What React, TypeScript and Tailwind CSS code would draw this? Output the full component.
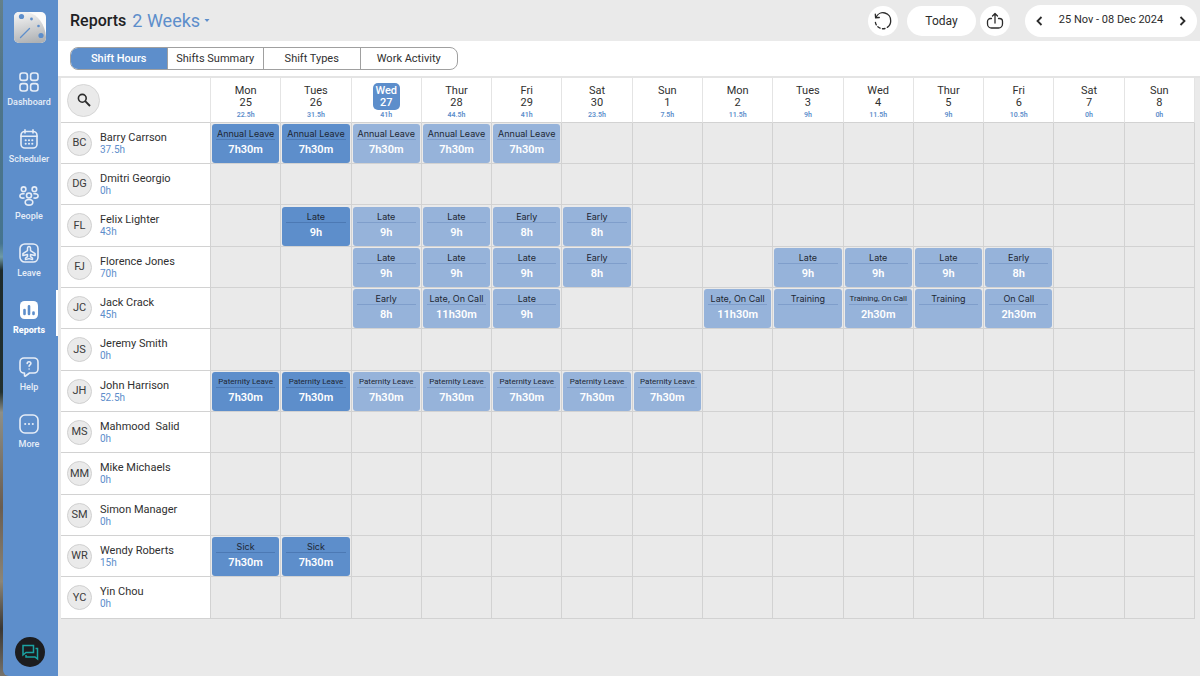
import React from "react";

const BRAND = "#5d8ecb";

type NavItem = { label: string; icon: React.ReactNode; active?: boolean };

function Icon({ children }: { children: React.ReactNode }) {
  return (
    <svg
      viewBox="0 0 20 20"
      className="size-5 shrink-0"
      fill="none"
      stroke="currentColor"
      strokeWidth="1.6"
      strokeLinecap="round"
      strokeLinejoin="round"
      aria-hidden="true"
    >
      {children}
    </svg>
  );
}

const navItems: NavItem[] = [
  {
    label: "Dashboard",
    icon: (
      <Icon>
        <rect x="1" y="1" width="7.4" height="7.4" rx="2.4" />
        <rect x="11.6" y="1" width="7.4" height="7.4" rx="2.4" />
        <rect x="1" y="11.6" width="7.4" height="7.4" rx="2.4" />
        <rect x="11.6" y="11.6" width="7.4" height="7.4" rx="2.4" />
      </Icon>
    ),
  },
  {
    label: "Scheduler",
    icon: (
      <Icon>
        <rect x="2" y="2.5" width="16" height="16.5" rx="3.8" />
        <path d="M2 7.2h16M6 .9v3M14 .9v3" />
        <path d="M6.7 11.2h.01M10 11.2h.01M13.3 11.2h.01M6.7 14.7h.01M10 14.7h.01M13.3 14.7h.01" strokeWidth="2.1" />
      </Icon>
    ),
  },
  {
    label: "People",
    icon: (
      <Icon>
        <circle cx="4.6" cy="3.2" r="2.3" />
        <circle cx="15.4" cy="3.2" r="2.3" />
        <circle cx="10" cy="9.5" r="2.5" />
        <ellipse cx="10" cy="16.3" rx="3.8" ry="2.8" />
        <path d="M5 12C2.500 12.500.9 11.500.9 10c0-1.600 1.600-2.500 4.100-2.300M15 12c2.500.5 4.100-.5 4.100-2 0-1.600-1.600-2.500-4.100-2.300" />
      </Icon>
    ),
  },
  {
    label: "Leave",
    icon: (
      <Icon>
        <rect x="1" y="1" width="18" height="18" rx="4.8" />
        <path
          d="M10 3.4c1 0 1.500 1 1.500 2.200v2l4.600 3.100v1.900l-4.600-1v2.100l2 1.400v1.500L10 15.600l-3.500 1v-1.500l2-1.400v-2.100l-4.600 1v-1.900l4.600-3.100v-2c0-1.200.5-2.200 1.500-2.200z"
          strokeWidth="1.5"
        />
      </Icon>
    ),
  },
  {
    label: "Reports",
    active: true,
    icon: (
      <svg viewBox="0 0 20 20" className="size-5 shrink-0" aria-hidden="true">
        <rect x="1" y="1" width="18" height="18" rx="4.5" fill="#fff" />
        <path d="M5.500 10v4M10 6.300v7.700M14.500 12.500v1.500" stroke={BRAND} strokeWidth="2.6" strokeLinecap="round" />
      </svg>
    ),
  },
  {
    label: "Help",
    icon: (
      <Icon>
        <path d="M5 1h10a4 4 0 0 1 4 4v7a4 4 0 0 1-4 4h-4.500L6.500 19c-.5.300-1 0-1-.5V16H5a4 4 0 0 1-4-4V5a4 4 0 0 1 4-4z" />
        <path d="M8.200 6.400c0-1.100.8-1.700 1.800-1.700s1.900.7 1.900 1.700c0 1.400-1.800 1.500-1.800 2.800M10.100 12h.01" />
      </Icon>
    ),
  },
  {
    label: "More",
    icon: (
      <Icon>
        <rect x="1" y="1" width="18" height="18" rx="5" />
        <path d="M6.200 10h.01M10 10h.01M13.800 10h.01" strokeWidth="2.1" />
      </Icon>
    ),
  },
];

type Day = { name: string; date: number; total: string; today?: boolean };

const days: Day[] = [
  { name: "Mon", date: 25, total: "22.5h" },
  { name: "Tues", date: 26, total: "31.5h" },
  { name: "Wed", date: 27, total: "41h", today: true },
  { name: "Thur", date: 28, total: "44.5h" },
  { name: "Fri", date: 29, total: "41h" },
  { name: "Sat", date: 30, total: "23.5h" },
  { name: "Sun", date: 1, total: "7.5h" },
  { name: "Mon", date: 2, total: "11.5h" },
  { name: "Tues", date: 3, total: "9h" },
  { name: "Wed", date: 4, total: "11.5h" },
  { name: "Thur", date: 5, total: "9h" },
  { name: "Fri", date: 6, total: "10.5h" },
  { name: "Sat", date: 7, total: "0h" },
  { name: "Sun", date: 8, total: "0h" },
];

type Shift = [label: string, hours: string];
type Person = { initials: string; name: string; total: string; shifts: Record<number, Shift> };

const annual: Shift = ["Annual Leave", "7h30m"];
const paternity: Shift = ["Paternity Leave", "7h30m"];
const sick: Shift = ["Sick", "7h30m"];
const late: Shift = ["Late", "9h"];
const early: Shift = ["Early", "8h"];
const training: Shift = ["Training", ""];

const people: Person[] = [
  { initials: "BC", name: "Barry Carrson", total: "37.5h", shifts: { 0: annual, 1: annual, 2: annual, 3: annual, 4: annual } },
  { initials: "DG", name: "Dmitri Georgio", total: "0h", shifts: {} },
  { initials: "FL", name: "Felix Lighter", total: "43h", shifts: { 1: late, 2: late, 3: late, 4: early, 5: early } },
  {
    initials: "FJ",
    name: "Florence Jones",
    total: "70h",
    shifts: { 2: late, 3: late, 4: late, 5: early, 8: late, 9: late, 10: late, 11: early },
  },
  {
    initials: "JC",
    name: "Jack Crack",
    total: "45h",
    shifts: {
      2: early,
      3: ["Late, On Call", "11h30m"],
      4: late,
      7: ["Late, On Call", "11h30m"],
      8: training,
      9: ["Training, On Call", "2h30m"],
      10: training,
      11: ["On Call", "2h30m"],
    },
  },
  { initials: "JS", name: "Jeremy Smith", total: "0h", shifts: {} },
  {
    initials: "JH",
    name: "John Harrison",
    total: "52.5h",
    shifts: { 0: paternity, 1: paternity, 2: paternity, 3: paternity, 4: paternity, 5: paternity, 6: paternity },
  },
  { initials: "MS", name: "Mahmood  Salid", total: "0h", shifts: {} },
  { initials: "MM", name: "Mike Michaels", total: "0h", shifts: {} },
  { initials: "SM", name: "Simon Manager", total: "0h", shifts: {} },
  { initials: "WR", name: "Wendy Roberts", total: "15h", shifts: { 0: sick, 1: sick } },
  { initials: "YC", name: "Yin Chou", total: "0h", shifts: {} },
];

const tabs = ["Shift Hours", "Shifts Summary", "Shift Types", "Work Activity"];

function Sidebar() {
  return (
    <aside className="flex shrink-0 bg-[linear-gradient(180deg,#64808a_0%,#4f7488_12%,#45748f_36%,#6f9aa6_38%,#1d2a2c_40%,#22302f_58%,#8d8f88_61%,#6a5d50_75%,#8b8577_86%,#3a3733_93%,#77736b_100%)] pl-[3px]">
      <div className="flex w-[55px] flex-col rounded-bl-md bg-[#5d8ecb] pt-3 pb-[9px] text-[#e6edf7]">
        <svg viewBox="0 0 32 32" className="ml-[11px] size-8" role="img" aria-label="Logo">
          <defs>
            <linearGradient id="logo" x1="0.4" y1="0" x2="0.6" y2="1">
              <stop offset="0" stopColor="#f2f2f2" />
              <stop offset="1" stopColor="#aeb1b4" />
            </linearGradient>
          </defs>
          <rect width="32" height="31" rx="5" fill="#fbfbfb" />
          <path d="M0 5a5 5 0 0 1 5-5h9C24 3 31 12 32 25v1a5 5 0 0 1-5 5H5a5 5 0 0 1-5-5z" fill="url(#logo)" />
          <g fill={BRAND}>
            <circle cx="7.5" cy="4.5" r="2.6" />
            <circle cx="17.5" cy="7" r="1.4" />
            <circle cx="24.5" cy="14" r="1.3" />
            <circle cx="27" cy="23.5" r="2.6" />
          </g>
          <path d="M6.500 25.500l9-9" stroke={BRAND} strokeWidth="1.3" strokeLinecap="round" />
        </svg>
        <nav className="mt-[18px] w-full">
          <ul>
            {navItems.map((item) => (
              <li key={item.label} className="h-[57px]">
                <a
                  href="#"
                  aria-current={item.active ? "page" : undefined}
                  className={`flex h-[46px] w-full flex-col items-center gap-1 border-r-2 pt-[10px] pr-px text-[9px] leading-3 ${
                    item.active ? "border-white font-extrabold text-white" : "border-transparent font-medium"
                  }`}
                >
                  {item.icon}
                  {item.label}
                </a>
              </li>
            ))}
          </ul>
        </nav>
        <button aria-label="Chat" className="mt-auto ml-3 grid size-[30px] place-items-center rounded-full bg-[#1c1d20] text-[#1ba3a3]">
          <svg viewBox="0 0 18 18" className="size-[18px]" fill="none" stroke="currentColor" strokeWidth="1.5" aria-hidden="true">
            <path d="M2 2.500h10.500v7H5L2 12z" />
            <path d="M14.500 5.500H16.500V16l-2.500-2H5v-2" />
          </svg>
        </button>
      </div>
    </aside>
  );
}

function Header() {
  return (
    <header className="flex h-[41px] items-center bg-[#eaeaea] pr-[3px] pl-3">
      <h1 className="text-base font-medium text-[#202124]">Reports</h1>
      <button className="ml-[6px] flex items-center gap-1 text-lg text-[#5d8ecb]">
        2 Weeks
        <svg viewBox="0 0 6 4" className="h-1 w-[6px]" fill="currentColor" aria-hidden="true">
          <path d="M.5 0h5L3 3z" />
        </svg>
      </button>
      <div className="ml-auto flex items-center text-[#2b2b2b]">
        <button aria-label="Reset" className="grid size-[30px] place-items-center rounded-full bg-white">
          <svg viewBox="0 0 20 20" className="size-5" fill="none" stroke="currentColor" strokeWidth="1.3" strokeLinecap="round" aria-hidden="true">
            <path d="M3 6.300A7.700 7.700 0 0 1 17.700 10a7.700 7.700 0 0 1-3.400 6.400" />
            <path d="M12 17.500A7.700 7.700 0 0 1 2.300 10" strokeDasharray="2.6 2.4" />
            <path d="M2.300 3.200l.3 3.500 3.700-.2" />
          </svg>
        </button>
        <button className="ml-[9px] h-[30px] w-[69px] rounded-full bg-white text-xs">Today</button>
        <button aria-label="Share" className="ml-1 grid size-[30px] place-items-center rounded-full bg-white">
          <svg viewBox="0 0 18 18" className="size-[18px]" fill="none" stroke="currentColor" strokeWidth="1.3" strokeLinecap="round" strokeLinejoin="round" aria-hidden="true">
            <path d="M5.500 6.500H4.500A3 3 0 0 0 1.500 9.500v2.500a4 4 0 0 0 4 4h7a4 4 0 0 0 4-4V9.500a3 3 0 0 0-3-3h-1" />
            <path d="M9 11V2M6.500 4L9 1.500 11.500 4" />
          </svg>
        </button>
        <div className="ml-[15px] flex h-8 w-[172px] items-center justify-between rounded-full bg-white px-[10px] text-[11px]">
          <button aria-label="Previous period">
            <Chevron d="M6.500 1L2.500 5l4 4" />
          </button>
          <span className="whitespace-nowrap">25 Nov - 08 Dec 2024</span>
          <button aria-label="Next period">
            <Chevron d="M3.500 1l4 4-4 4" />
          </button>
        </div>
      </div>
    </header>
  );
}

function Chevron({ d }: { d: string }) {
  return (
    <svg viewBox="0 0 10 10" className="size-[10px]" fill="none" stroke="currentColor" strokeWidth="1.8" aria-hidden="true">
      <path d={d} />
    </svg>
  );
}

function Tabs() {
  return (
    <div className="flex h-[35px] items-center bg-white pl-3">
      <div role="tablist" className="grid h-[23px] w-[388px] grid-cols-4 overflow-hidden rounded-lg border border-[#a0a0a0]">
        {tabs.map((tab, i) => (
          <button
            key={tab}
            role="tab"
            aria-selected={i === 0}
            className={`border-[#a0a0a0] pt-px text-[11px] whitespace-nowrap not-last:border-r ${
              i === 0 ? "bg-[#5d8ecb] font-medium text-white" : "text-[#303030]"
            }`}
          >
            {tab}
          </button>
        ))}
      </div>
    </div>
  );
}

function ShiftCard({ shift, past }: { shift: Shift; past: boolean }) {
  const [label, hours] = shift;
  return (
    <div className={`h-[39px] rounded-[3px] px-1 text-center ${past ? "bg-[#5d8ecb]" : "bg-[#96b3da]"}`}>
      <div
        className={`flex h-4 justify-center border-b whitespace-nowrap text-[#1d2733] ${
          past ? "border-[#4c79b4]" : "border-[#7f9ecb]"
        } ${label.length > 13 ? "text-[8px] leading-5" : "font-['Inter','Liberation_Sans',sans-serif] text-[9px] leading-5"}`}
      >
        {label}
      </div>
      <div className="text-[11px] leading-5 font-semibold text-white">{hours}</div>
    </div>
  );
}

function Schedule() {
  return (
    <div className="border-t-2 border-[#e4e4e4] pr-[5px] pl-[3px]">
      <table className="w-full table-fixed border-separate border-spacing-0">
        <thead>
          <tr className="h-[45px] bg-white">
            <th className="w-[150px] border-r border-b border-r-[#e4e4e4] border-b-[#d2d2d2] p-0 pl-[6px] text-left">
              <button aria-label="Search people" className="grid size-[33px] place-items-center rounded-full border border-[#d6d6d6] bg-[#eaeaea] text-[#2b2b2b]">
                <svg viewBox="0 0 14 14" className="size-[14px]" fill="none" stroke="currentColor" strokeWidth="1.6" aria-hidden="true">
                  <circle cx="5.3" cy="5.3" r="3.9" />
                  <path d="M8.200 8.200l4.800 4.800" strokeWidth="1.9" />
                </svg>
              </button>
            </th>
            {days.map((day) => (
              <th key={day.date} className="border-r border-b border-r-[#e4e4e4] border-b-[#d2d2d2] p-0 pt-[5px] align-top font-normal">
                <div
                  className={`mx-auto w-[27px] rounded-[5px] pt-[2px] pb-px text-[11px] leading-3 ${
                    day.today ? "bg-[#5d8ecb] font-medium text-white" : "text-[#303030]"
                  }`}
                >
                  <div>{day.name}</div>
                  <div>{day.date}</div>
                </div>
                <div className="pt-px text-[7px] leading-2 font-semibold text-[#5d8ecb]">{day.total}</div>
              </th>
            ))}
          </tr>
        </thead>
        <tbody>
          {people.map((person) => (
            <tr key={person.name} className="h-[41px] nth-[3n]:h-[42px]">
              <th scope="row" className="border-r border-b border-[#d2d2d2] bg-white p-0 pl-[6px] text-left font-normal">
                <div className="flex items-center gap-2">
                  <span className="grid size-[25px] place-items-center rounded-full border border-[#d0d0d0] bg-[#eaeaea] pt-px text-[11px] text-[#3a3a3a]">
                    {person.initials}
                  </span>
                  <div className="pt-px leading-3">
                    <div className="text-[11px] whitespace-pre text-[#303030]">{person.name}</div>
                    <div className="text-[10px] text-[#5d8ecb]">{person.total}</div>
                  </div>
                </div>
              </th>
              {days.map((day, i) => (
                <td key={day.date} className="border-r border-b border-[#d2d2d2] p-0 px-px align-bottom">
                  {person.shifts[i] && <ShiftCard shift={person.shifts[i]} past={i < 2} />}
                </td>
              ))}
            </tr>
          ))}
        </tbody>
      </table>
    </div>
  );
}

export default function App() {
  return (
    <div className="flex min-h-screen bg-[#eaeaea] font-['Roboto','Liberation_Sans',sans-serif]">
      <Sidebar />
      <main className="min-w-0 flex-1">
        <Header />
        <Tabs />
        <Schedule />
      </main>
    </div>
  );
}
